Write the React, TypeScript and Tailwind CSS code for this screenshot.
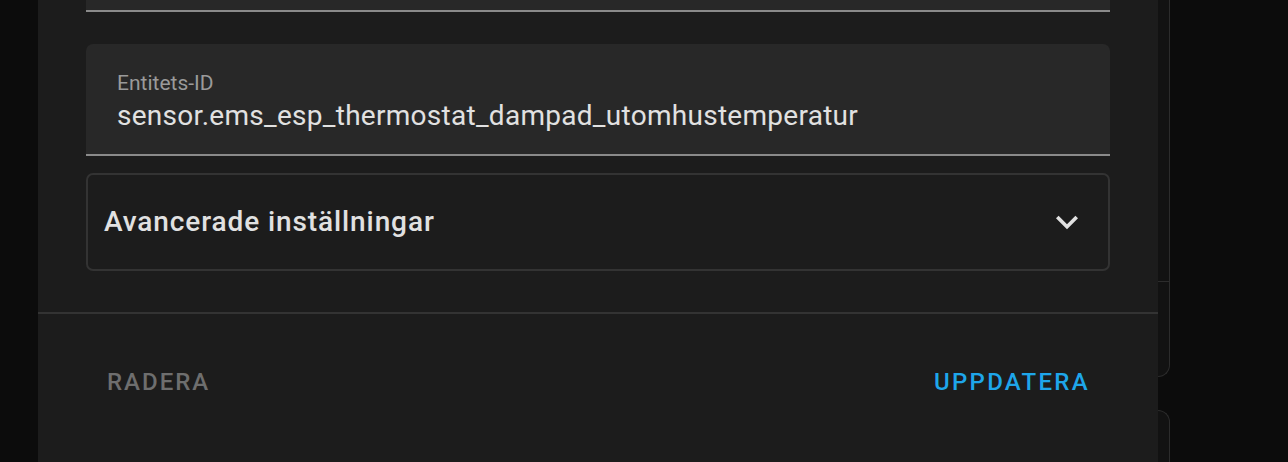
export default function App() {
  return (
    <div className="flex h-[462px] w-[1288px] overflow-hidden bg-[#0c0c0c] font-['Roboto',sans-serif] text-[#e1e1e1]">
      {/* backdrop strip on the left */}
      <div className="w-[38px] shrink-0" />

      {/* dialog */}
      <div className="flex w-[1120px] shrink-0 flex-col bg-[#1c1c1c]">
        <div className="flex flex-col px-[48px]">
          {/* tail of the previous text field */}
          <div className="h-[12px] border-b-2 border-[#8a8a8a] bg-[#282828]" />

          {/* entity id field */}
          <div className="mt-[32px] flex h-[112px] flex-col rounded-t-[7px] border-b-2 border-[#8a8a8a] bg-[#282828] pl-[31px] pt-[29px]">
            <span className="text-[21px] leading-[21px] text-[#9a9a9a]">Entitets-ID</span>
            <span className="mt-[8px] text-[28px] leading-[28px] tracking-[0.28px] text-[#e1e1e1]">
              sensor.ems_esp_thermostat_dampad_utomhustemperatur
            </span>
          </div>

          {/* advanced settings expander */}
          <div className="mt-[17px] flex h-[98px] items-center justify-between rounded-[7px] border-2 border-[#333333] pl-[16px] pr-[19px]">
            <span className="text-[28px] font-medium leading-[28px] tracking-[0.9px] text-[#e1e1e1]">
              Avancerade inställningar
            </span>
            <svg viewBox="0 0 24 24" className="h-[44px] w-[44px]" fill="#e1e1e1">
              <path d="M7.41,8.58L12,13.17L16.59,8.58L18,10L12,16L6,10L7.41,8.58Z" />
            </svg>
          </div>
        </div>

        {/* footer */}
        <div className="mt-[41px] border-t-2 border-[#333333]">
          <div className="flex items-start justify-between pl-[69px] pr-[68px] pt-[56px]">
            <button className="text-[24px] font-medium leading-[24px] tracking-[2px] text-[#6e6e6e]">RADERA</button>
            <button className="text-[24px] font-medium leading-[24px] tracking-[2.3px] text-[#1ea6ea]">UPPDATERA</button>
          </div>
        </div>
      </div>

      {/* cards peeking out behind the dialog */}
      <div className="flex w-[12px] shrink-0 flex-col">
        <div className="flex h-[377px] flex-col rounded-br-[12px] border-b border-r border-[#2c2c2c] bg-[#121212]">
          <div className="h-[282px] border-b border-[#2c2c2c]" />
        </div>
        <div className="mt-[33px] flex-1 rounded-tr-[12px] border-r border-t border-[#2c2c2c] bg-[#121212]" />
      </div>
      <div className="flex-1" />
    </div>
  )
}
